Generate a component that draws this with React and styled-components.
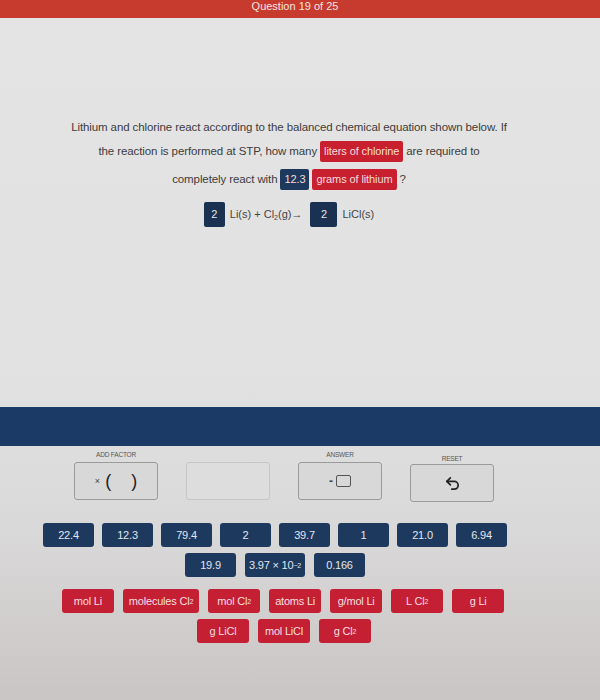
import React from "react";
import styled, { createGlobalStyle } from "styled-components";
import { Undo2 } from "lucide-react";

const GlobalStyle = createGlobalStyle`
  body {
    margin: 0;
    font-family: "Liberation Sans", Arial, sans-serif;
    background: #d6d4d4;
  }
`;

const numbers = ["22.4", "12.3", "79.4", "2", "39.7", "1", "21.0", "6.94"];

const units = [
  ["mol Li"],
  ["molecules Cl", "2"],
  ["mol Cl", "2"],
  ["atoms Li"],
  ["g/mol Li"],
  ["L Cl", "2"],
  ["g Li"],
];

const units2 = [["g LiCl"], ["mol LiCl"], ["g Cl", "2"]];

function App() {
  return (
    <>
      <GlobalStyle />
      <Page>
        <Header>
          <HeaderText>Question 19 of 25</HeaderText>
        </Header>

        <Question>
          <Line>
            Lithium and chlorine react according to the balanced chemical equation shown below. If
          </Line>
          <Line>
            the reaction is performed at STP, how many
            <Chip $red>liters of chlorine</Chip>
            are required to
          </Line>
          <Line $gap={4}>
            completely react with
            <Chip>12.3</Chip>
            <Chip $red>grams of lithium</Chip>
            ?
          </Line>
          <Equation>
            <CoefChip>2</CoefChip>
            <span>
              Li(s) + Cl<sub>2</sub>(g)→
            </span>
            <CoefChip $wide>2</CoefChip>
            <span>LiCl(s)</span>
          </Equation>
        </Question>

        <Band />

        <Tools>
          <Tool>
            <ToolLabel>ADD FACTOR</ToolLabel>
            <ToolBox>
              <Times>×</Times>
              <Paren>(</Paren>
              <ParenGap />
              <Paren>)</Paren>
            </ToolBox>
          </Tool>
          <Tool>
            <ToolLabel />
            <ToolBox $faint />
          </Tool>
          <Tool>
            <ToolLabel>ANSWER</ToolLabel>
            <ToolBox>
              <Dash>-</Dash>
              <AnswerSlot />
            </ToolBox>
          </Tool>
          <Tool>
            <ToolLabel $low>RESET</ToolLabel>
            <ToolBox $low>
              <Undo2 size={17} strokeWidth={2.4} color="#222" />
            </ToolBox>
          </Tool>
        </Tools>

        <Tiles>
          <TileRow $shift={-10} $gap={8}>
            {numbers.map((n, i) => (
              <Tile key={i}>{n}</Tile>
            ))}
          </TileRow>
          <TileRow $top={6} $shift={-10}>
            <Tile>19.9</Tile>
            <Tile $wide>
              3.97 × 10<sup>−2</sup>
            </Tile>
            <Tile>0.166</Tile>
          </TileRow>
          <TileRow $top={12} $shift={6}>
            {units.map(([t, s]) => (
              <Tile $red key={t}>
                {t}
                {s && <sub>{s}</sub>}
              </Tile>
            ))}
          </TileRow>
          <TileRow $top={6} $shift={8}>
            {units2.map(([t, s]) => (
              <Tile $red key={t}>
                {t}
                {s && <sub>{s}</sub>}
              </Tile>
            ))}
          </TileRow>
        </Tiles>
      </Page>
    </>
  );
}

export default App;

const Page = styled.div`
  width: 600px;
  height: 700px;
  overflow: hidden;
  background: linear-gradient(
    180deg,
    #e5e4e4 0%,
    #e2e1e1 55%,
    #dad9d9 75%,
    #c9c5c4 100%
  );
  color: #3a3a3a;
`;

const Header = styled.div`
  height: 18px;
  background: #c63b2d;
  overflow: hidden;
  display: flex;
  justify-content: center;
  padding-right: 10px;
`;

const HeaderText = styled.span`
  color: #f4e4e0;
  font-size: 11px;
  line-height: 12px;
  margin-top: 0;
`;

const Question = styled.div`
  width: 542px;
  padding: 97px 0 0 18px;
  display: flex;
  flex-direction: column;
  align-items: center;
`;

const Line = styled.div`
  height: 24px;
  margin-top: ${(p) => p.$gap || 0}px;
  display: flex;
  align-items: center;
  gap: 3px;
  font-size: 11.5px;
  letter-spacing: -0.1px;
  white-space: nowrap;
  color: #3c3c3c;
`;

const Chip = styled.span`
  display: inline-flex;
  align-items: center;
  height: 21px;
  padding: 0 4px;
  border-radius: 2px;
  background: ${(p) => (p.$red ? "#c8202f" : "#1d3a5e")};
  color: #f3dcdc;
  font-size: 11px;
`;

const Equation = styled.div`
  margin-top: 10px;
  height: 26px;
  display: flex;
  align-items: center;
  gap: 5px;
  font-size: 11px;
  color: #444;

  sub {
    font-size: 7px;
    vertical-align: -2px;
  }
`;

const CoefChip = styled.span`
  display: inline-flex;
  align-items: center;
  justify-content: center;
  width: ${(p) => (p.$wide ? 27 : 21)}px;
  height: 25px;
  margin-left: ${(p) => (p.$wide ? 3 : 0)}px;
  border-radius: 2px;
  background: #1b3151;
  color: #e6e6ea;
  font-size: 11px;
`;

const Band = styled.div`
  margin-top: 180px;
  height: 39px;
  background: #1b3a66;
`;

const Tools = styled.div`
  width: 560px;
  display: flex;
  justify-content: center;
  gap: 28px;
  padding-top: 3px;
  padding-left: 8px;
  box-sizing: border-box;
`;

const Tool = styled.div`
  display: flex;
  flex-direction: column;
  align-items: center;
`;

const ToolLabel = styled.div`
  height: 12px;
  margin-top: ${(p) => (p.$low ? 4 : 0)}px;
  font-size: 6.5px;
  letter-spacing: -0.2px;
  color: #555;
  line-height: 12px;
`;

const ToolBox = styled.div`
  width: 84px;
  height: 38px;
  margin-top: ${(p) => (p.$low ? -1 : 1)}px;
  box-sizing: border-box;
  border: 1.5px solid ${(p) => (p.$faint ? "#c6c6c6" : "#9b9b9b")};
  border-radius: 3px;
  background: ${(p) => (p.$faint ? "#dedddd" : "#d9d8d8")};
  display: flex;
  align-items: center;
  justify-content: center;
  gap: 3px;
`;

const Times = styled.span`
  font-size: 9px;
  color: #444;
  margin-right: 2px;
`;

const Paren = styled.span`
  font-size: 18px;
  line-height: 18px;
  color: #222;
`;

const ParenGap = styled.span`
  width: 14px;
`;

const Dash = styled.span`
  font-size: 12px;
  font-weight: bold;
  color: #444;
`;

const AnswerSlot = styled.span`
  width: 13px;
  height: 10px;
  border: 1.5px solid #555;
  border-radius: 2px;
`;

const Tiles = styled.div`
  width: 560px;
  padding-top: 21px;
  display: flex;
  flex-direction: column;
  align-items: center;
`;

const TileRow = styled.div`
  margin-top: ${(p) => p.$top || 0}px;
  margin-left: ${(p) => p.$shift || 0}px;
  display: flex;
  justify-content: center;
  gap: ${(p) => p.$gap || 9}px;
`;

const Tile = styled.div`
  min-width: ${(p) => (p.$wide ? 58 : p.$red ? 52 : 51)}px;
  height: 24px;
  padding: 0 ${(p) => (p.$red ? 6 : 4)}px;
  box-sizing: border-box;
  border-radius: 3px;
  background: ${(p) => (p.$red ? "#c51f33" : "#1d3a5e")};
  color: ${(p) => (p.$red ? "#f6dfe0" : "#e2e6ee")};
  font-size: 11px;
  letter-spacing: -0.2px;
  display: flex;
  align-items: center;
  justify-content: center;
  white-space: nowrap;

  sub {
    font-size: 7px;
    vertical-align: -2px;
  }

  sup {
    font-size: 7px;
    vertical-align: 4px;
  }
`;
